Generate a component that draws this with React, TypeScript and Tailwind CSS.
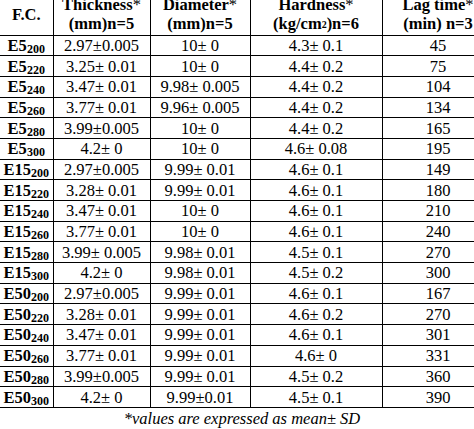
const rows: [string, string, string, string, string, string][] = [
  ['E5', '200', '2.97±0.005', '10± 0', '4.3± 0.1', '45'],
  ['E5', '220', '3.25± 0.01', '10± 0', '4.4± 0.2', '75'],
  ['E5', '240', '3.47± 0.01', '9.98± 0.005', '4.4± 0.2', '104'],
  ['E5', '260', '3.77± 0.01', '9.96± 0.005', '4.4± 0.2', '134'],
  ['E5', '280', '3.99±0.005', '10± 0', '4.4± 0.2', '165'],
  ['E5', '300', '4.2± 0', '10± 0', '4.6± 0.08', '195'],
  ['E15', '200', '2.97±0.005', '9.99± 0.01', '4.6± 0.1', '149'],
  ['E15', '220', '3.28± 0.01', '9.99± 0.01', '4.6± 0.1', '180'],
  ['E15', '240', '3.47± 0.01', '10± 0', '4.6± 0.1', '210'],
  ['E15', '260', '3.77± 0.01', '10± 0', '4.6± 0.1', '240'],
  ['E15', '280', '3.99± 0.005', '9.98± 0.01', '4.5± 0.1', '270'],
  ['E15', '300', '4.2± 0', '9.98± 0.01', '4.5± 0.2', '300'],
  ['E50', '200', '2.97±0.005', '9.99± 0.01', '4.6± 0.1', '167'],
  ['E50', '220', '3.28± 0.01', '9.99± 0.01', '4.6± 0.2', '270'],
  ['E50', '240', '3.47± 0.01', '9.99± 0.01', '4.6± 0.1', '301'],
  ['E50', '260', '3.77± 0.01', '9.99± 0.01', '4.6± 0', '331'],
  ['E50', '280', '3.99±0.005', '9.99± 0.01', '4.5± 0.2', '360'],
  ['E50', '300', '4.2± 0', '9.99±0.01', '4.5± 0.1', '390'],
];

const cell = 'border-[1.5px] border-black p-0 text-center align-middle';

export default function App() {
  return (
    <div className="w-[474px] h-[429px] overflow-hidden bg-white text-black font-['Liberation_Serif']">
      <table className="w-[494px] -mt-[6px] border-collapse table-fixed text-[16.5px] leading-[19px] font-['Liberation_Serif']">
        <colgroup>
          <col className="w-[53px]" />
          <col className="w-[97px]" />
          <col className="w-[100px]" />
          <col className="w-[132px]" />
          <col className="w-[112px]" />
        </colgroup>
        <thead>
          <tr className="h-[41px] font-bold">
            <th className={`${cell} border-l-0 border-t-0`}>F.C.</th>
            <th className={`${cell} border-t-0`}>
              Thickness<span className="font-normal">*</span>
              <br />
              (mm)n=5
            </th>
            <th className={`${cell} border-t-0`}>
              Diameter<span className="font-normal">*</span>
              <br />
              (mm)n=5
            </th>
            <th className={`${cell} border-t-0`}>
              Hardness<span className="font-normal">*</span>
              <br />
              (kg/cm<sup className="text-[10px] relative -top-[1px]">2</sup>)n=6
            </th>
            <th className={`${cell} border-t-0 whitespace-nowrap`}>
              Lag time<span className="font-normal">*</span>
              <br />
              (min) n=3
            </th>
          </tr>
        </thead>
        <tbody>
          {rows.map(([name, sub, t, d, h, lag], i) => (
            <tr key={i} className="h-[20.7px]">
              <td className={`${cell} border-l-0 font-bold whitespace-nowrap`}>
                {name}
                <sub className="text-[12px] relative top-[2px] align-baseline">{sub}</sub>
              </td>
              <td className={`${cell} whitespace-nowrap`}>{t}</td>
              <td className={`${cell} whitespace-nowrap`}>{d}</td>
              <td className={`${cell} whitespace-nowrap`}>{h}</td>
              <td className={`${cell} whitespace-nowrap`}>{lag}</td>
            </tr>
          ))}
        </tbody>
      </table>
      <p className="pl-[10px] text-center italic text-[16.5px] leading-[20px] pt-[1px]">
        *values are expressed as mean± SD
      </p>
    </div>
  );
}
